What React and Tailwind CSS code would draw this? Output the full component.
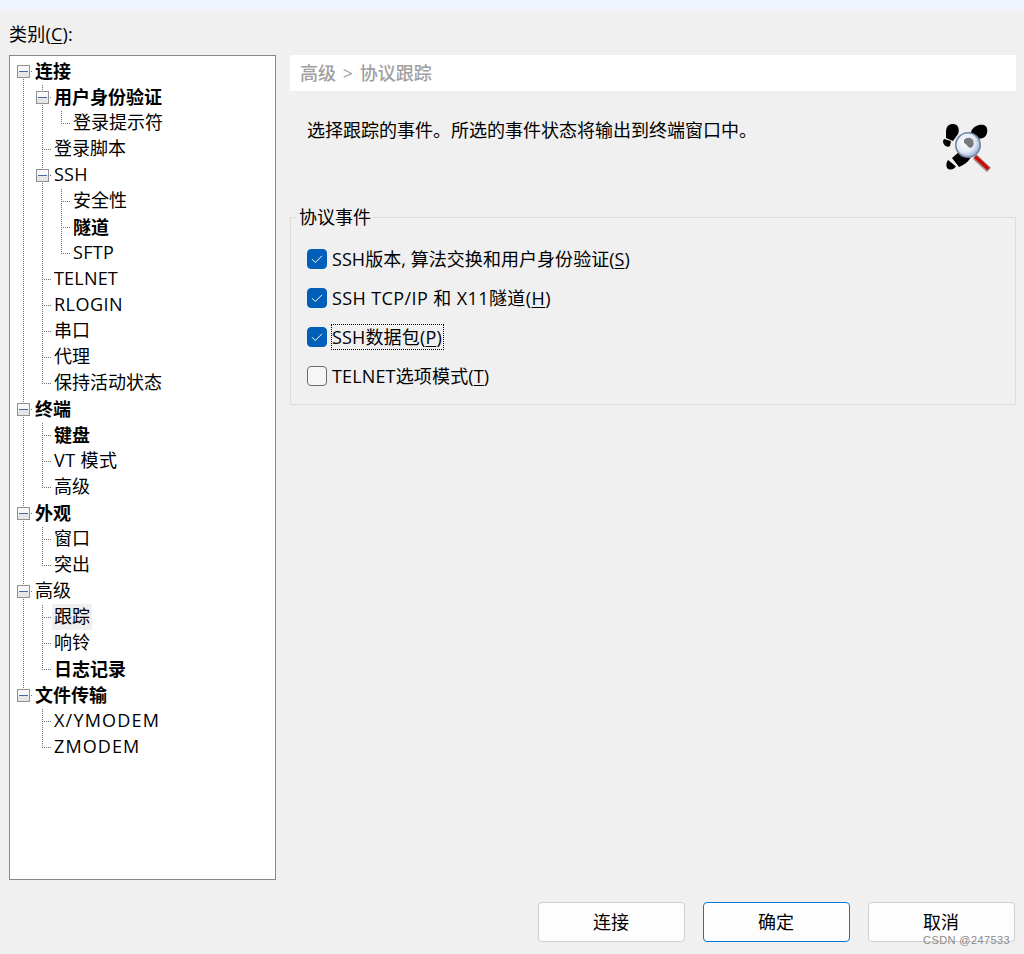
import { useState } from "react";

const tree = [
  {
    label: "连接",
    bold: true,
    children: [
      { label: "用户身份验证", bold: true, children: [{ label: "登录提示符" }] },
      { label: "登录脚本" },
      {
        label: "SSH",
        spacing: "tracking-[0.2px]",
        children: [
          { label: "安全性" },
          { label: "隧道", bold: true },
          { label: "SFTP", spacing: "tracking-[0.3px]" },
        ],
      },
      { label: "TELNET", spacing: "tracking-[0.2px]" },
      { label: "RLOGIN", spacing: "tracking-[0.5px]" },
      { label: "串口" },
      { label: "代理" },
      { label: "保持活动状态" },
    ],
  },
  {
    label: "终端",
    bold: true,
    children: [
      { label: "键盘", bold: true },
      { label: "VT 模式", spacing: "tracking-[0.4px]" },
      { label: "高级" },
    ],
  },
  {
    label: "外观",
    bold: true,
    children: [{ label: "窗口" }, { label: "突出" }],
  },
  {
    label: "高级",
    children: [
      { label: "跟踪" },
      { label: "响铃" },
      { label: "日志记录", bold: true },
    ],
  },
  {
    label: "文件传输",
    bold: true,
    children: [
      { label: "X/YMODEM", spacing: "tracking-[1.2px]" },
      { label: "ZMODEM", spacing: "tracking-[1.1px]" },
    ],
  },
];

const events = [
  { text: "SSH版本, 算法交换和用户身份验证", hotkey: "S", spacing: "tracking-[0.05px]" },
  { text: "SSH TCP/IP 和 X11隧道", hotkey: "H", spacing: "tracking-[0.4px]" },
  { text: "SSH数据包", hotkey: "P", spacing: "tracking-[0.15px]" },
  { text: "TELNET选项模式", hotkey: "T", spacing: "tracking-[0.15px]" },
];

// One 19x26 cell of the dotted connector lines
const Guide = ({ up, down, branch, box }) => (
  <svg width="19" height="26" className="shrink-0" shapeRendering="crispEdges">
    <g stroke="#6e6e6e" strokeDasharray="1 1">
      {up && <path d="M9.5 1V14" />}
      {down && <path d="M9.5 13V26" />}
      {branch && <path d="M9 13.5H18" />}
    </g>
    {box && (
      <g>
        <rect x="2" y="6" width="15" height="15" fill="#fff" />
        <rect x="3.5" y="7.5" width="12" height="12" fill="#f8f8f8" stroke="#919191" />
        <rect x="4" y="14" width="11" height="5" fill="#e6e6e6" />
        <path d="M5 13.5H14" stroke="#4b63a7" />
        <path d="M17 13.5H18" stroke="#6e6e6e" />
      </g>
    )}
  </svg>
);

const TreeNode = ({ node, trail, first, last, selected, onSelect }) => {
  const root = trail.length === 0;

  return (
    <li>
      <div className="flex h-[26px]">
        {trail.map((open, i) => (
          <Guide key={i} up={open} down={open} />
        ))}
        <Guide
          up={!(root && first)}
          down={!last}
          branch
          box={Boolean(node.children)}
        />
        <span
          onClick={() => onSelect(node)}
          className={`px-[2px] whitespace-nowrap ${
            node.bold ? "leading-[26px] font-bold" : "pb-[2px] leading-6"
          } ${node.spacing || ""} ${selected === node ? "bg-[#f0f0f0]" : ""}`}
        >
          {node.label}
        </span>
      </div>
      {node.children && (
        <ul>
          {node.children.map((child, i) => (
            <TreeNode
              key={child.label}
              node={child}
              trail={[...trail, !last]}
              last={i === node.children.length - 1}
              selected={selected}
              onSelect={onSelect}
            />
          ))}
        </ul>
      )}
    </li>
  );
};

const TraceIcon = () => (
  <svg width="48" height="50" viewBox="0 0 48 50">
    <defs>
      <radialGradient id="lens" cx="0.4" cy="0.4" r="0.65">
        <stop offset="0" stopColor="#ffffff" />
        <stop offset="0.6" stopColor="#e3ebf5" />
        <stop offset="1" stopColor="#8ba6cd" />
      </radialGradient>
    </defs>
    {/* footprints */}
    <path d="M3 9C3 3 6 1 10 1C15 1 17 6 15 11L10 18L3 15Z" />
    <path d="M1 16L8 18L7 23C4 25 0 22 0 18Z" />
    <path d="M28 9C30 3 36 1 41 2C46 4 45 13 40 15C35 17 30 15 28 11Z" />
    <path d="M9 35L16 29L28 34C25 40 20 42 16 44Z" />
    <path d="M5 37L13 43C12 46 7 48 4 45C3 42 3 40 5 37Z" />
    <path d="M6.5 36.5L14 43.5" stroke="#f0f0f0" strokeWidth="1.5" />
    {/* handle */}
    <path d="M32 34L46 47" stroke="#a98f8f" strokeWidth="6" />
    <path d="M32 33.5L45.5 46" stroke="#c80c0c" strokeWidth="3.5" />
    <circle cx="25" cy="22" r="12.2" fill="url(#lens)" stroke="#7386a3" strokeWidth="1.6" />
    <path d="M21 17C23 14 28 14 30 17C31 20 31 23 28 25C25 25 24 21 21 20Z" fill="#77797c" />
  </svg>
);

const Checkbox = ({ item, checked, focused, onChange }) => (
  <label className="flex h-[39px] items-center">
    <input type="checkbox" checked={checked} onChange={onChange} className="sr-only" />
    <span
      className={`flex size-5 items-center justify-center rounded-[4px] border ${
        checked ? "border-[#005fb8] bg-[#005fb8]" : "border-[#6b6b6b] bg-[#f6f6f6]"
      }`}
    >
      {checked && (
        <svg width="12" height="10" viewBox="0 0 12 10" fill="none" stroke="#fff">
          <path d="M1 5.2L4.3 8.5L11 1.8" />
        </svg>
      )}
    </span>
    <span
      className={`ml-1 border pr-px leading-6 whitespace-nowrap ${
        item.spacing || ""
      } ${focused ? "border-dotted border-black" : "border-transparent"}`}
    >
      {item.text}(<u className="underline-offset-2">{item.hotkey}</u>)
    </span>
  </label>
);

const Button = ({ children, primary }) => (
  <button
    className={`h-10 w-[147px] rounded-[4px] border bg-[#fdfdfd] pr-px ${
      primary ? "border-[#0078d4]" : "border-[#d0d0d0]"
    }`}
  >
    {children}
  </button>
);

const App = () => {
  const [selected, setSelected] = useState(tree[3].children[0]);
  const [checked, setChecked] = useState([true, true, true, false]);

  const toggle = (index) =>
    setChecked(checked.map((value, i) => (i === index ? !value : value)));

  return (
    <div className="relative flex h-[954px] w-[1024px] flex-col overflow-hidden bg-[#f0f0f0] font-['Open_Sans','Noto_Sans_CJK_SC',sans-serif] text-[18px] text-black">
      <div className="h-[10px] shrink-0 bg-[#eff3fb]" />

      <div className="flex h-[870px] gap-[14px] pr-2 pl-[9px]">
        <div className="w-[267px] shrink-0">
          <div className="h-[45px] pt-[11px] leading-[26px] tracking-[0.2px]">
            类别(<u className="underline-offset-2">C</u>):
          </div>
          <ul className="h-[825px] border border-[#828790] bg-white pt-[2px] pl-1">
            {tree.map((node, i) => (
              <TreeNode
                key={node.label}
                node={node}
                trail={[]}
                first={i === 0}
                last={i === tree.length - 1}
                selected={selected}
                onSelect={setSelected}
              />
            ))}
          </ul>
        </div>

        <div className="flex-1 pt-[45px]">
          <div className="h-9 bg-white pl-[10px] leading-9 font-medium text-[#a0a0a0]">
            高级<span className="mx-[2px]"> &gt; </span>协议跟踪
          </div>
          <div className="flex h-[114px] justify-between pr-[25px] pl-[17px]">
            <p className="pt-[26px] leading-[26px]">
              选择跟踪的事件。所选的事件状态将输出到终端窗口中。
            </p>
            <div className="pt-8">
              <TraceIcon />
            </div>
          </div>
          <fieldset className="h-[200px] border border-[#dcdcdc] pl-4">
            <legend className="-ml-[10px] px-[2px] leading-6">协议事件</legend>
            <div className="pt-[10px]">
              {events.map((item, i) => (
                <Checkbox
                  key={item.hotkey}
                  item={item}
                  checked={checked[i]}
                  focused={i === 2}
                  onChange={() => toggle(i)}
                />
              ))}
            </div>
          </fieldset>
        </div>
      </div>

      <div className="flex justify-end gap-[18px] pt-[22px] pr-[9px]">
        <Button>连接</Button>
        <Button primary>确定</Button>
        <Button>取消</Button>
      </div>

      <span className="absolute right-[14px] bottom-[6px] font-['Liberation_Sans',sans-serif] text-[11px] leading-4 tracking-[0.4px] text-[#8a8a8a]">
        CSDN @247533
      </span>
    </div>
  );
};

export default App;
